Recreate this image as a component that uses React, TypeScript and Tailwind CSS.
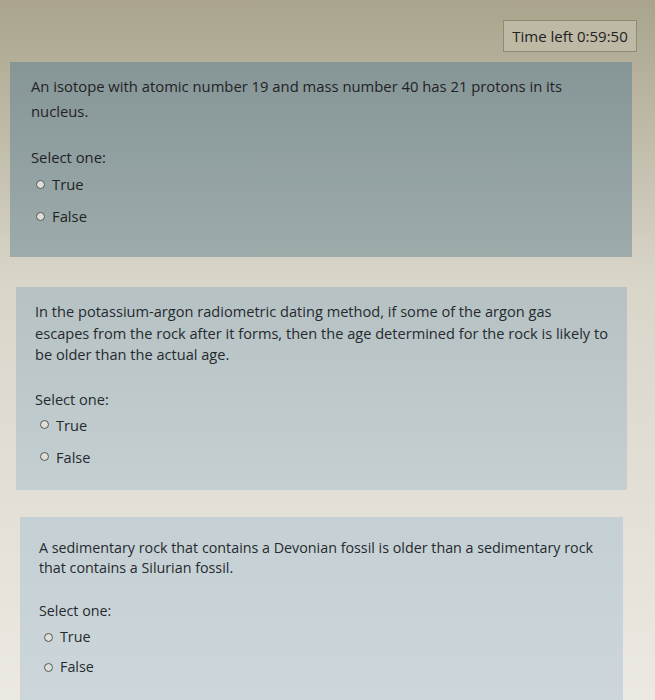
import React from "react";

type Question = {
  lines: string[];
  card: string;
  select: string;
  options: string;
};

const questions: Question[] = [
  {
    lines: [
      "An isotope with atomic number 19 and mass number 40 has 21 protons in its",
      "nucleus.",
    ],
    card: "ml-[10px] w-[622px] h-[195px] pl-[21px] pt-[12px] bg-gradient-to-b from-[#869596] to-[#9dabab] text-[14.8px] leading-[25px] text-[#1f2326]",
    select: "mt-[21px] leading-[25px]",
    options: "mt-[4px] pl-[5px] flex flex-col gap-[12px]",
  },
  {
    lines: [
      "In the potassium-argon radiometric dating method, if some of the argon gas",
      "escapes from the rock after it forms, then the age determined for the rock is likely to",
      "be older than the actual age.",
    ],
    card: "mt-[30px] ml-[16px] w-[611px] h-[203px] pl-[19px] pt-[14px] bg-gradient-to-b from-[#b5c1c3] to-[#c4cfd2] text-[14.6px] leading-[21.5px] text-[#262a2e]",
    select: "mt-[22px] leading-[22px]",
    options: "mt-[5px] pl-[5px] flex flex-col gap-[12px]",
  },
  {
    lines: [
      "A sedimentary rock that contains a Devonian fossil is older than a sedimentary rock",
      "that contains a Silurian fossil.",
    ],
    card: "mt-[27px] ml-[20px] w-[603px] h-[200px] pl-[19px] pt-[21px] bg-gradient-to-b from-[#c5d0d4] to-[#cdd7db] text-[14.3px] leading-[20px] text-[#262a2e]",
    select: "mt-[23px] leading-[20px]",
    options: "mt-[6px] pl-[5px] flex flex-col gap-[10px]",
  },
];

function Radio({ label }: { label: string }) {
  return (
    <label className="flex items-center gap-[7px] leading-[20px]">
      <span className="w-[9px] h-[9px] rounded-full border-[1.5px] border-[#50585a] bg-[#dedfd9]" />
      <span>{label}</span>
    </label>
  );
}

export default function App() {
  return (
    <div
      className="w-[655px] h-[700px] overflow-hidden bg-gradient-to-b from-[#a9a48b] via-[#d9d5c9] via-40% to-[#ece9e2]"
      style={{ fontFamily: '"Open Sans", "Noto Sans", sans-serif' }}
    >
      <div className="flex justify-end pt-[20px] pr-[18px]">
        <div className="h-[32px] w-[134px] flex items-center justify-center border border-[#8e8a78] bg-[#bdb9a5] text-[15px] text-[#222]">
          Time left 0:59:50
        </div>
      </div>

      <div className="mt-[10px] flex flex-col">
        {questions.map((q) => (
          <div key={q.lines[0]} className={q.card}>
            <div className="whitespace-nowrap">
              {q.lines.map((l) => (
                <div key={l}>{l}</div>
              ))}
            </div>
            <div className={q.select}>Select one:</div>
            <div className={q.options}>
              <Radio label="True" />
              <Radio label="False" />
            </div>
          </div>
        ))}
      </div>
    </div>
  );
}
